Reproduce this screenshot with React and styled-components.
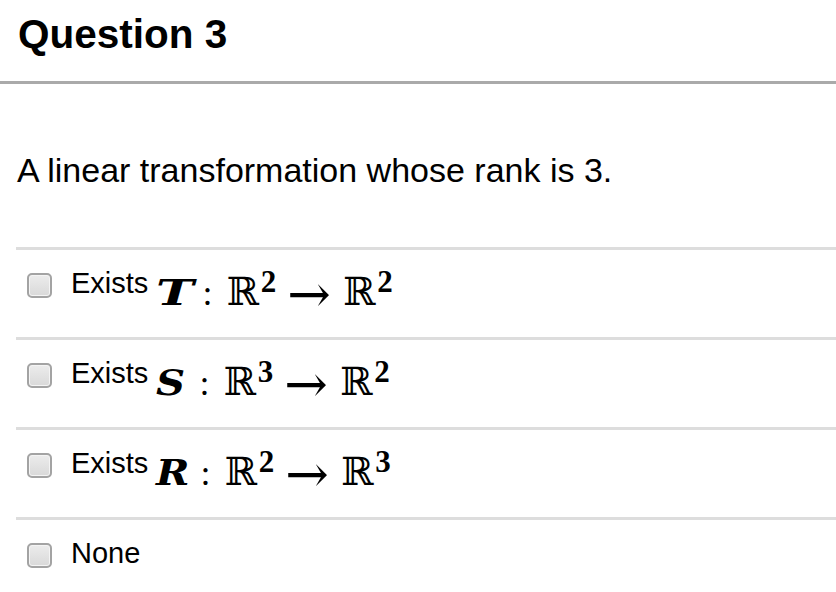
import React from "react";
import styled, { createGlobalStyle } from "styled-components";

const Global = createGlobalStyle`
  html, body { margin: 0; padding: 0; background: #fff; }
  body { font-family: "Liberation Sans", Arial, sans-serif; color: #000; }
`;

const Page = styled.div`
  width: 836px;
  height: 592px;
  overflow: hidden;
`;

const Header = styled.header`
  height: 69px;
  padding: 12px 18px 0;
  border-bottom: 3px solid #aaa;
`;

const Title = styled.h1`
  margin: 0;
  font-size: 40.5px;
  line-height: 45px;
  font-weight: bold;
`;

const Prompt = styled.p`
  margin: 66px 18px 0 17px;
  font-size: 34px;
  line-height: 40px;
`;

const OptionList = styled.div`
  margin: 57px 0 0 16px;
`;

const Option = styled.label`
  box-sizing: border-box;
  display: flex;
  align-items: flex-start;
  height: 90px;
  padding: 23px 0 0 11px;
  border-top: 3px solid #ddd;
`;

const Box = styled.span`
  box-sizing: border-box;
  flex: none;
  width: 25px;
  height: 25px;
  border: 2px solid #a3a3a3;
  border-radius: 5px;
  background: linear-gradient(#ececec, #d9d9d9);
  box-shadow: inset 0 0 0 1px #f4f4f4;
`;

const Label = styled.span`
  margin: -4px 0 0 19px;
  font-size: 29px;
  line-height: 29px;
  white-space: nowrap;
`;

const Math = styled.span`
  display: inline-block;
  font-size: 36px;
  line-height: 0;
  vertical-align: -12px;
  font-family: "Liberation Serif", "DejaVu Serif", serif;
`;

const MathVar = styled.span`
  display: inline-block;
  width: ${(p) => p.$w}px;
  font-family: "DejaVu Serif", serif;
  font-weight: bold;
  font-style: italic;
  font-size: 35px;
  transform: scaleX(${(p) => p.$sx});
  transform-origin: left center;
`;

const Colon = styled.span`
  display: inline-block;
  margin: 0 14px 0 4px;
  font-family: "Liberation Serif", serif;
  font-size: 36px;
`;

const Arrow = styled.span`
  display: inline-block;
  margin: 0 12px 0 11px;
  font-family: "DejaVu Serif", serif;
  font-size: 52px;
  vertical-align: -7px;
`;

const Blackboard = styled.span`
  font-family: "DejaVu Serif", serif;
  font-size: 39px;
`;

const Sup = styled.span`
  display: inline-block;
  font-family: "Liberation Serif", serif;
  font-weight: bold;
  font-size: 31px;
  vertical-align: 13px;
  margin-left: 2px;
`;

const options = [
  { v: "T", w: 42, sx: 1.45, a: "2", b: "2" },
  { v: "S", w: 39, sx: 1.15, a: "3", b: "2" },
  { v: "R", w: 40, sx: 1.15, a: "2", b: "3" },
];

export default function App() {
  return (
    <Page>
      <Global />
      <Header>
        <Title>Question 3</Title>
      </Header>
      <Prompt>A linear transformation whose rank is 3.</Prompt>
      <OptionList>
        {options.map((o) => (
          <Option key={o.v}>
            <Box />
            <Label>
              Exists{" "}
              <Math>
                <MathVar $w={o.w} $sx={o.sx}>
                  {o.v}
                </MathVar>
                <Colon>:</Colon>
                <Blackboard>ℝ</Blackboard>
                <Sup>{o.a}</Sup>
                <Arrow>→</Arrow>
                <Blackboard>ℝ</Blackboard>
                <Sup>{o.b}</Sup>
              </Math>
            </Label>
          </Option>
        ))}
        <Option>
          <Box />
          <Label>None</Label>
        </Option>
      </OptionList>
    </Page>
  );
}
